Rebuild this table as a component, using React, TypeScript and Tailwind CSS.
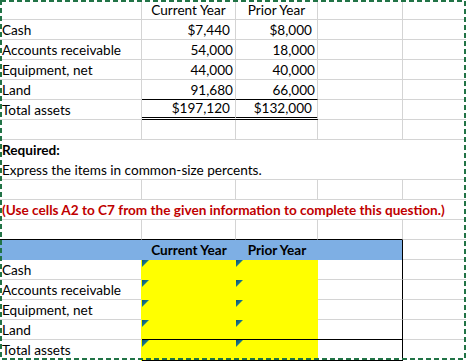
import React from "react";

type Row = {
  label?: string;
  cy?: string;
  py?: string;
  dollar?: boolean;
};

const grid = "border-r border-b border-[#d4d4d4]";

const topRows: Row[] = [
  { label: "Cash", cy: "$7,440", py: "$8,000", dollar: true },
  { label: "Accounts receivable", cy: "54,000", py: "18,000" },
  { label: "Equipment, net", cy: "44,000", py: "40,000" },
  { label: "Land", cy: "91,680", py: "66,000" },
];

const answerRows = ["Cash", "Accounts receivable", "Equipment, net", "Land", "Total assets"];

function Cell({ className = "", children }: { className?: string; children?: React.ReactNode }) {
  return (
    <div className={`relative h-[20px] flex items-end whitespace-nowrap leading-[17px] ${className}`}>
      {children}
    </div>
  );
}

// little error-indicator flag in the corner of the yellow input cells
function Flag() {
  return (
    <svg className="absolute left-0 top-0" width="8" height="8" viewBox="0 0 8 8">
      <defs>
        <linearGradient id="flag" x1="0" y1="0" x2="1" y2="1">
          <stop offset="0" stopColor="#0b4f78" />
          <stop offset="1" stopColor="#2fa89a" />
        </linearGradient>
      </defs>
      <polygon points="0,0 7,0 0,7" fill="url(#flag)" />
    </svg>
  );
}

export default function App() {
  return (
    <div className="relative w-[466px] h-[361px] overflow-hidden bg-white text-black font-['Lato',sans-serif] text-[13.6px]">
      <div className="grid grid-cols-[142px_94px_82px_85px_63px]">
        {/* header row */}
        <Cell className={grid} />
        <Cell className={`${grid} justify-center`}>Current Year</Cell>
        <Cell className={`${grid} justify-center`}>Prior Year</Cell>
        <Cell className={grid} />
        <Cell className="border-b border-[#d4d4d4]" />

        {/* given figures */}
        {topRows.map((r, i) => {
          const last = i === topRows.length - 1;
          const num = `${grid} justify-end ${r.dollar ? "pr-[5px]" : "pr-[2px]"} ${last ? "border-b-black" : ""}`;
          return (
            <React.Fragment key={r.label}>
              <Cell className={`${grid} pl-[2px]`}>{r.label}</Cell>
              <Cell className={num}>{r.cy}</Cell>
              <Cell className={num}>{r.py}</Cell>
              <Cell className={grid} />
              <Cell className="border-b border-[#d4d4d4]" />
            </React.Fragment>
          );
        })}

        <Cell className={`${grid} pl-[2px]`}>Total assets</Cell>
        <Cell className="border-r border-[#d4d4d4] border-b-[3px] border-b-black border-double justify-end pr-[5px] leading-[15px]">$197,120</Cell>
        <Cell className="border-r border-[#d4d4d4] border-b-[3px] border-b-black border-double justify-end pr-[5px] leading-[15px]">$132,000</Cell>
        <Cell className={grid} />
        <Cell className="border-b border-[#d4d4d4]" />

        {/* blank */}
        <Cell className={grid} />
        <Cell className={grid} />
        <Cell className={grid} />
        <Cell className={grid} />
        <Cell className="border-b border-[#d4d4d4]" />

        {/* instructions */}
        <Cell className="col-span-5 pl-[2px] font-bold pb-[1px]">Required:</Cell>
        <Cell className="col-span-5 pl-[2px] border-b border-[#d4d4d4]">Express the items in common-size percents.</Cell>

        <Cell className={grid} />
        <Cell className={grid} />
        <Cell className={grid} />
        <Cell className={grid} />
        <Cell className="border-b border-[#d4d4d4]" />

        <Cell className="col-span-5 pl-[2px] font-bold text-[#c00000] border-b border-[#d4d4d4]">
          (Use cells A2 to C7 from the given information to complete this question.)
        </Cell>

        <Cell className="border-r border-[#d4d4d4] border-b border-b-black" />
        <Cell className="border-r border-[#d4d4d4] border-b border-b-black" />
        <Cell className="border-r border-[#d4d4d4] border-b border-b-black" />
        <Cell className="border-r border-[#d4d4d4] border-b border-b-black" />
        <Cell className="border-b border-[#d4d4d4]" />

        {/* answer table */}
        <Cell className="bg-[#7eafe4] pb-[1px]" />
        <Cell className="bg-[#7eafe4] justify-center font-bold pb-[1px]">Current Year</Cell>
        <Cell className="bg-[#7eafe4] justify-center font-bold pb-[1px]">Prior Year</Cell>
        <Cell className="bg-[#7eafe4] border-r border-black" />
        <Cell className="border-b border-[#d4d4d4]" />

        {answerRows.map((label, i) => {
          const total = i === answerRows.length - 1;
          const beforeTotal = i === answerRows.length - 2;
          const edge = beforeTotal || total ? "border-b border-black" : "";
          return (
            <React.Fragment key={label}>
              <Cell
                className={`${total ? "h-[21px] pb-[2px]" : "border-b border-[#d4d4d4]"} border-r border-r-[#ffff00] pl-[2px]`}
              >
                {label}
              </Cell>
              <Cell className={`bg-[#ffff00] ${total ? "h-[21px]" : ""} ${edge}`}>
                <Flag />
              </Cell>
              <Cell className={`bg-[#ffff00] ${total ? "h-[21px]" : ""} ${edge}`}>
                <Flag />
              </Cell>
              <Cell
                className={`border-r border-black ${total ? "h-[21px]" : ""} ${
                  edge || "border-b border-b-[#d4d4d4]"
                }`}
              />
              <Cell className={total ? "h-[21px]" : "border-b border-[#d4d4d4]"} />
            </React.Fragment>
          );
        })}
      </div>

      {/* copy selection marquee */}
      <svg className="absolute left-0 top-0 pointer-events-none" width="466" height="361">
        <rect x="1" y="1" width="464" height="358" fill="none" stroke="#217346" strokeWidth="2" strokeDasharray="5 3" />
      </svg>
    </div>
  );
}
